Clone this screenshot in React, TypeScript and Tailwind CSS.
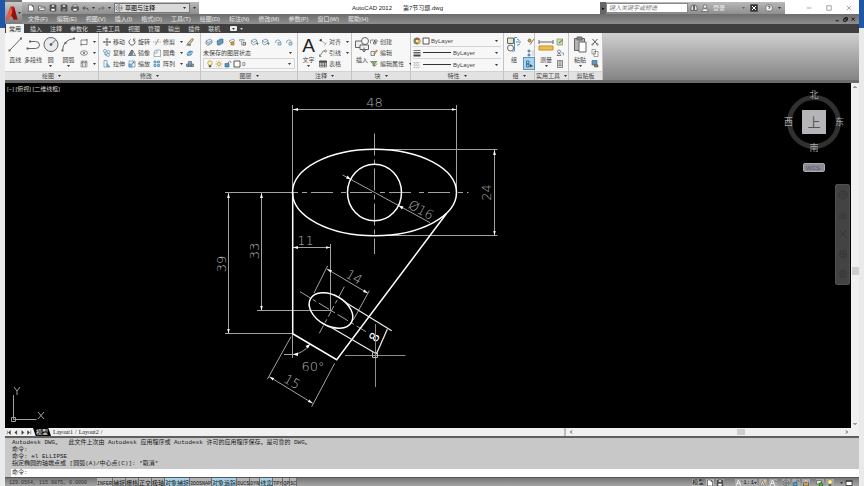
import type { ReactNode } from "react";

const MENUS = [
  "文件(F)", "编辑(E)", "视图(V)", "插入(I)", "格式(O)", "工具(T)",
  "绘图(D)", "标注(N)", "修改(M)", "参数(P)", "窗口(W)", "帮助(H)",
];

const TABS = ["插入", "注释", "参数化", "三维工具", "视图", "管理", "输出", "插件", "联机"];

const TOGGLES = [
  { label: "INFER" },
  { label: "捕捉", cjk: true },
  { label: "栅格", cjk: true },
  { label: "正交", cjk: true },
  { label: "极轴", cjk: true },
  { label: "对象捕捉", cjk: true, on: true },
  { label: "3DOSNAP" },
  { label: "对象追踪", cjk: true, on: true },
  { label: "DUCS" },
  { label: "DYN" },
  { label: "线宽", cjk: true, on: true },
  { label: "TPY" },
  { label: "QP" },
  { label: "SC" },
];

const HISTORY = [
  "Autodesk DWG。  此文件上次由 Autodesk 应用程序或 Autodesk 许可的应用程序保存。是可靠的 DWG。",
  "命令:",
  "命令: el ELLIPSE",
  "指定椭圆的轴端点或 [圆弧(A)/中心点(C)]: *取消*",
];

// 16x16 line glyphs used all over the ribbon
const GLYPHS: Record<string, ReactNode> = {
  new: <path d="M3 2h7l3 3v9H3zM10 2v3h3" fill="#fff" />,
  open: <path d="M1 13V4h5l1 2h6v2M1 13l3-5h11l-3 5z" fill="#eee" />,
  save: <><path d="M2 2h12v12H2z" fill="#555" /><path d="M5 2h6v4H5zM4 9h8v5H4z" fill="#fff" /></>,
  saveAs: <><path d="M2 2h12v12H2z" fill="#555" /><path d="M5 2h6v4H5z" fill="#fff" /><path d="M5 12h6" stroke="#fff" /></>,
  print: <><path d="M4 2h8v4H4zM4 10h8v4H4z" fill="#fff" /><path d="M1 6h14v6H1z" fill="#666" /><path d="M4 9h8v5H4z" fill="#fff" /></>,
  undo: <path d="M6 3L2 7l4 4M2 7h8q4 0 4 5" strokeWidth="2" />,
  redo: <path d="M10 3l4 4-4 4M14 7H6q-4 0-4 5" strokeWidth="2" />,
  gear: <><circle cx="8" cy="8" r="6" strokeDasharray="2 1.5" strokeWidth="2" /><circle cx="8" cy="8" r="2.5" /></>,
  rect: <><path d="M2 4h12v9H2z" /><path d="M1 12h3v3H1zM12 2h3v3h-3z" fill="#777" stroke="none" /></>,
  ellipse: <><ellipse cx="8" cy="8" rx="7" ry="4.5" /><path d="M7 7h2v2H7z" fill="#444" /></>,
  hatch: <path d="M2 2h12v12H2zM2 8l6-6M2 13L13 2M7 14l7-7M2 5h12M5 2v12M11 2v12" strokeWidth="0.8" />,
  move: <path d="M8 1v14M1 8h14M6 3l2-2 2 2M6 13l2 2 2-2M3 6L1 8l2 2M13 6l2 2-2 2" strokeWidth="1.6" />,
  rotate: <><path d="M5 3a6 6 0 1 0 6 0" strokeWidth="1.6" /><path d="M11 7V2h4" /></>,
  trim: <><path d="M0 8h6M10 8h6" stroke="#888" strokeDasharray="3 1" /><path d="M5 14L11 2" /></>,
  pencil: <><path d="M3 11L12 1l3 2-8 10z" fill="#e9c98a" /><path d="M1 14h9" strokeWidth="2" /></>,
  copy: <><circle cx="4" cy="4" r="3" stroke="#3c7fae" /><circle cx="11" cy="6" r="3" stroke="#3c7fae" /><circle cx="10" cy="12" r="3" stroke="#3c7fae" /><path d="M4 7v5h3" /></>,
  mirror: <><path d="M7 2v11H1z" fill="#5a93bb" /><path d="M9 2v11h6z" fill="#d5e6f2" /></>,
  fillet: <path d="M2 15V8q0-6 6-6h7v13zM2 8h6V2" stroke="#6b8699" />,
  explode: <><path d="M2 9l5-5 7 1-4 7-7 1z" fill="#5ca0cf" stroke="#2f6e9d" /><path d="M3 9l5 1 6-5" stroke="#fff" /></>,
  stretch: <><path d="M2 1h6v13H2z" stroke="#3c7fae" /><path d="M8 7l6 7H8z" fill="#8fbad7" stroke="#3c7fae" /></>,
  scale: <><path d="M2 2h12v12H2z" stroke="#3c7fae" /><path d="M2 8h6v6H2z" fill="#8fbad7" stroke="#3c7fae" /><path d="M8 8l4-4M9 4h3v3" /></>,
  array: <path d="M2 2h4v4H2zM9 2h4v4H9zM2 9h4v4H2zM9 9h4v4H9z" fill="#b9d6e8" stroke="#3c7fae" strokeWidth="1.4" />,
  offset: <><path d="M1 13V8h4V3h6v5h4v5z" fill="#78a9c9" stroke="#47545e" /><path d="M5 13v-3h6v3" /></>,
  layer: <><path d="M2 6l8-4 4 3-8 5z" fill="#dcecf6" stroke="#47738f" /><path d="M2 9l4 4 8-5M2 6v6l4 3 8-5V5" stroke="#47738f" /></>,
  layerBlue: <path d="M2 6l7-4h5v8l-7 4H3z" fill="#5d9cc6" stroke="#315e7d" />,
  layerSun: <><path d="M2 6l8-4 4 3-8 5z" stroke="#47738f" /><path d="M6 8h6v6H6z" fill="#d99b3b" stroke="#a36b1c" /></>,
  layerLock: <><path d="M1 3h9v3H1zM5 6v8h8V8" stroke="#6f8390" /><path d="M8 9h5v5H8z" fill="#ead9ad" /></>,
  layerGo: <><path d="M1 5l7-3 4 3-7 4zM1 5v6l4 3 7-4V5" stroke="#47738f" /><path d="M10 11h5M13 9v5" stroke="#2c6c2c" /></>,
  loop: <><path d="M3 10a5 5 0 1 1 10-2" stroke="#5b8fb1" strokeWidth="1.5" /><path d="M8 9h6v5H8z" fill="#cfe1ec" stroke="#52778f" /></>,
  bulb: <><circle cx="8" cy="6" r="4.5" fill="#fff2a6" stroke="#9c8631" /><path d="M6 11h4v3H6z" fill="#888" /></>,
  sun: <><circle cx="8" cy="8" r="3.5" fill="#ffe9a0" stroke="#a37f20" /><path d="M8 1v2M8 13v2M1 8h2M13 8h2M3 3l1 1M12 12l1 1M13 3l-1 1M4 12l-1 1" stroke="#a37f20" /></>,
  unlock: <><path d="M2 7h8v7H2z" fill="#4d97c8" stroke="#2b5f83" /><path d="M9 7V4q2-4 5 0v2" /></>,
  swatch: <path d="M2 2h12v12H2z" fill="#fff" stroke="#222" strokeWidth="1.5" />,
  align: <><path d="M2 4l12 8M5 1L1 6M15 9l-4 6" stroke="#7b8791" /><path d="M2 3h3v3H2z" fill="#444" /></>,
  leader: <><path d="M2 14L8 4h3" /><circle cx="13" cy="4" r="2" /><path d="M1 11v4h4" /></>,
  table: <><path d="M1 2h14v12H1zM1 8h14M1 11h14M6 5v9M11 5v9" /><path d="M1 2h14v3H1z" fill="#555" /></>,
  create: <><path d="M1 11V4h8v4" /><path d="M7 8h5v4H7z" fill="#dcdcdc" /><circle cx="12" cy="6" r="2.5" /></>,
  edit: <><path d="M2 5h7v8H2z" /><path d="M7 10l6-8 2 1-6 8z" fill="#deb25a" stroke="#8b6b2b" /></>,
  attr: <><path d="M1 3h13l-5 5v4H6V8z" fill="#89a878" stroke="#56704a" /><path d="M9 13l5-6" stroke="#b17e26" strokeWidth="2" /></>,
  wheel: <><circle cx="8" cy="8" r="6.5" fill="#62994e" stroke="#777" /><path d="M8 8L2 5q6-7 12 0z" fill="#cf4b3c" stroke="none" /><path d="M8 8l6-3q3 6-4 9z" fill="#e8b53c" stroke="none" /><circle cx="8" cy="8" r="2.5" fill="#eee" stroke="none" /></>,
  weights: <><path d="M1 3h14" strokeWidth="1.5" /><path d="M1 7.5h14" strokeWidth="2.5" /><path d="M1 13h14" strokeWidth="4" /></>,
  types: <path d="M1 3h14M1 8h14M1 13h14M4 3v10M9 3v10" stroke="#999" strokeDasharray="3 1.5" />,
  groupEdit: <><circle cx="5" cy="5" r="3" fill="#c3a13b" /><path d="M6 13L14 2" stroke="#a36b1c" strokeWidth="2" /></>,
  groupList: <><path d="M2 2h4v4H2zM2 10h4v4H2z" fill="#7fa9c5" stroke="#47738f" /><path d="M9 4h5M9 8h5M9 12h5" stroke="#aaa" /></>,
  groupSel: <><path d="M3 2h5v5H3zM3 9h5v5H3z" stroke="#1f557b" strokeWidth="1.5" /><path d="M10 9v5l5-2z" fill="#1f557b" /></>,
  quick: <><path d="M2 2h11v12H2z" fill="#cbd9a8" stroke="#77875a" /><path d="M6 10l8-7" stroke="#4a7a2d" strokeWidth="2" /></>,
  point: <><circle cx="6" cy="5" r="3" /><path d="M2 13l4-5 4 5z" /><path d="M10 8h5v5" stroke="#47738f" /></>,
  calc: <><path d="M3 1h10v14H3z" fill="#ddd" /><path d="M5 4h6M5 8h6M5 11h6" /></>,
  cut: <><path d="M3 2l9 10M13 2L4 12" strokeWidth="1.8" /><circle cx="3" cy="13" r="1.5" /><circle cx="13" cy="13" r="1.5" /></>,
  dup: <path d="M2 1h7v9H2zM6 5h8v10H6z" fill="#fff" stroke="#666" />,
  brush: <><path d="M2 1h10v9H2z" fill="#5f97bd" stroke="#315e7d" /><path d="M7 10h7v4H7z" fill="#c98f39" /></>,
  find: <path d="M2 13V7l3-5h2v11zM9 13V2h2l3 5v6zM7 7h2" fill="#e4e4e4" stroke="#333" />,
  user: <><circle cx="8" cy="5" r="3.5" fill="#eee" /><path d="M1 15q1-6 7-6t7 6z" fill="#eee" /></>,
  exchange: <><path d="M1 1h14v14H1z" fill="#333" /><path d="M4 4l8 8M12 4l-8 8" stroke="#fff" strokeWidth="2" /></>,
  help: <><circle cx="8" cy="8" r="7" fill="#eee" stroke="#444" /><path d="M6 6q0-2 2-2t2 2-2 3v1M8 12v1" stroke="#222" strokeWidth="1.5" /></>,
  anno: <><path d="M7 2L2 14M7 2l5 12M4 9h6" stroke="#eee" strokeWidth="1.8" /><path d="M12 3l3 3" stroke="#222" /></>,
  annoSun: <><path d="M7 3L2 14h3l2-5 2 5h3z" fill="#fff" stroke="#666" /><circle cx="12" cy="4" r="2.5" fill="#eac84a" stroke="none" /></>,
  lock: <><path d="M3 7h10v7H3z" fill="#d5a24a" /><path d="M5 7V5q3-5 6 0v2" stroke="#eee" /></>,
  hw: <><path d="M1 3h10v7H1z" fill="#dde8d4" /><circle cx="10" cy="11" r="4" fill="#4da43d" stroke="#265f1e" /></>,
  clean: <path d="M2 3h12v10H2zM2 5h12" fill="#fff" stroke="#222" strokeWidth="1.5" />,
};

function Glyph({ name, className = "w-2 h-2" }: { name: string; className?: string }) {
  return (
    <svg className={`${className} shrink-0`} viewBox="0 0 16 16" fill="none" stroke="#444" strokeWidth="1.2" aria-hidden="true">
      {GLYPHS[name]}
    </svg>
  );
}

function Caret({ className = "text-[#333]" }: { className?: string }) {
  return (
    <svg className={`w-[3px] h-[2px] shrink-0 ${className}`} viewBox="0 0 6 4" fill="currentColor" aria-hidden="true">
      <path d="M0 0h6L3 4z" />
    </svg>
  );
}

function Panel({ title, caret = true, className, children }: { title: string; caret?: boolean; className: string; children: ReactNode }) {
  return (
    <section className={`flex flex-col shrink-0 border-r border-[#c4c4c4] bg-[#f7f7f7] ${className}`}>
      <div className="flex flex-1 items-stretch px-[2px] pt-[3px]">{children}</div>
      <h2 className="flex h-[9px] items-center justify-center gap-1 bg-[#e2e2e2] border-t border-[#d2d2d2]">
        {title}
        {caret && <Caret />}
      </h2>
    </section>
  );
}

function BigTool({ label, caret, className, children }: { label: string; caret?: boolean; className: string; children: ReactNode }) {
  return (
    <button className={`flex flex-col items-center ${className}`}>
      <svg className="w-4 h-[17px]" viewBox="0 0 32 34" fill="none" stroke="#666" strokeWidth="2" aria-hidden="true">
        {children}
      </svg>
      <span className="mt-1 whitespace-nowrap">{label}</span>
      {caret && <span className="mt-[2px]"><Caret /></span>}
    </button>
  );
}

function Tool({ icon, label, caret }: { icon: string; label?: string; caret?: boolean }) {
  return (
    <button className="flex h-[11px] items-center gap-[2px] whitespace-nowrap" aria-label={label ?? icon}>
      <Glyph name={icon} />
      {label}
      {caret && <span className="pl-[3px]"><Caret /></span>}
    </button>
  );
}

function Combo({ label, value }: { label: string; value: string }) {
  return (
    <span className="flex flex-1 items-center min-w-0 pr-[3px]">
      <select aria-label={label} className="appearance-none flex-1 min-w-0 bg-transparent outline-none leading-[8px]">
        <option>{value}</option>
      </select>
      <Caret />
    </span>
  );
}

function TitleBar() {
  return (
    <div className="flex h-[14px] items-center justify-between pt-[2px] bg-white">
      <div className="flex h-full w-[177px] items-center gap-[3px] bg-gradient-to-b from-[#b9b9b9] to-[#8e8e8e] pl-[5px]">
        <div className="flex items-center gap-[3px]">
          {["new", "open", "save", "saveAs", "print"].map((n) => (
            <button key={n} aria-label={n}><Glyph name={n} /></button>
          ))}
          <button aria-label="undo"><Glyph name="undo" className="w-[7px] h-[7px]" /></button>
          <Caret />
          <button aria-label="redo"><Glyph name="redo" className="w-[7px] h-[7px] opacity-60" /></button>
          <Caret />
        </div>
        <div className="flex flex-1 h-[10px] items-center gap-[2px] bg-[#dadada] border border-[#777] text-black">
          <Glyph name="gear" />
          <Combo label="工作空间" value="草图与注释" />
        </div>
        <span className="pr-[3px]"><Caret /></span>
      </div>
      <h1 className="flex flex-1 justify-center gap-[11px] pr-1 text-[#222] whitespace-nowrap">
        <span>AutoCAD 2012</span>
        <span>第7节习题.dwg</span>
      </h1>
      <div className="flex h-full w-[185px] items-center bg-gradient-to-b from-[#b9b9b9] to-[#8e8e8e]">
        <span className="flex h-full w-[6px] items-center justify-center bg-[#666] text-[5px] text-black">▸</span>
        <input
          aria-label="搜索"
          placeholder="键入关键字或短语"
          className="h-[10px] w-[82px] bg-white px-[2px] italic border border-[#888] outline-none placeholder:text-[#777]"
        />
        <div className="flex flex-1 items-center gap-[3px] pl-[2px] pr-1">
          <button aria-label="查找"><Glyph name="find" /></button>
          <button className="flex items-center gap-1 text-[#eee]"><Glyph name="user" />登录</button>
          <span className="flex-1" />
          <Caret className="text-[#666]" />
          <button aria-label="Exchange" className="px-[2px]"><Glyph name="exchange" /></button>
          <button aria-label="帮助" className="px-[2px]"><Glyph name="help" /></button>
          <Caret />
        </div>
      </div>
      <div className="flex w-[74px] items-center justify-end gap-[14px] pr-[7px]">
        {["M1 4h6", "M1 1h6v6H1z", "M1 1l6 6M7 1L1 7"].map((d) => (
          <button key={d} aria-label="窗口">
            <svg className="w-[6px] h-[6px]" viewBox="0 0 8 8" fill="none" stroke="#888"><path d={d} /></svg>
          </button>
        ))}
      </div>
    </div>
  );
}

function Ribbon() {
  return (
    <div className="flex h-[50px] bg-gradient-to-b from-[#d0d0d0] to-[#848484] border-b-[3px] border-[#6c6c6c] text-[#444]">
      <Panel title="绘图" className="w-[94px]">
        <BigTool label="直线" className="w-[17px]">
          <path d="M5 29L28 5" />
          <path d="M3 27h4v4H3zM26 3h4v4h-4z" fill="#666" stroke="none" />
        </BigTool>
        <BigTool label="多段线" className="w-[20px]">
          <path d="M5 25h16q8 0 8-7t-8-7H10" />
          <path d="M3 23h4v4H3zM8 9h4v4H8z" fill="#666" stroke="none" />
        </BigTool>
        <BigTool label="圆" caret className="w-[17px]">
          <circle cx="16" cy="17" r="14" fill="#e8ebee" />
          <path d="M16 17l9-9" />
          <circle cx="16" cy="17" r="2" fill="#555" />
        </BigTool>
        <BigTool label="圆弧" caret className="w-[20px]">
          <path d="M5 29Q6 8 28 5" />
          <path d="M3 27h4v4H3zM26 3h4v4h-4zM9 12h4v4H9z" fill="#666" stroke="none" />
        </BigTool>
        <div className="flex flex-col pl-[2px]">
          <Tool icon="rect" caret />
          <Tool icon="ellipse" caret />
          <Tool icon="hatch" caret />
        </div>
      </Panel>

      <Panel title="修改" className="w-[102px]">
        <div className="flex flex-1 justify-between pl-[2px] pr-1">
          <div>
            <Tool icon="move" label="移动" />
            <Tool icon="copy" label="复制" />
            <Tool icon="stretch" label="拉伸" />
          </div>
          <div>
            <Tool icon="rotate" label="旋转" />
            <Tool icon="mirror" label="镜像" />
            <Tool icon="scale" label="缩放" />
          </div>
          <div>
            <Tool icon="trim" label="修剪" caret />
            <Tool icon="fillet" label="圆角" caret />
            <Tool icon="array" label="阵列" caret />
          </div>
          <div>
            <Tool icon="pencil" />
            <Tool icon="explode" />
            <Tool icon="offset" />
          </div>
        </div>
      </Panel>

      <Panel title="图层" className="w-[97px]">
        <div className="flex flex-1 flex-col">
          <div className="flex h-[11px] justify-between px-[2px]">
            {["layer", "layerBlue", "layerSun", "layerLock", "layerGo", "layerGo", "loop", "loop"].map((n, i) => (
              <Tool key={i} icon={n} />
            ))}
          </div>
          <div className="flex h-[11px] items-center">
            <Combo label="图层状态" value="未保存的图层状态" />
          </div>
          <div className="flex h-[11px] items-center gap-px pl-[2px] border border-[#d5d5d5]">
            <Glyph name="bulb" />
            <Glyph name="sun" />
            <Glyph name="unlock" />
            <Glyph name="swatch" />
            <Combo label="图层" value="0" />
          </div>
        </div>
      </Panel>

      <Panel title="注释" className="w-[54px]">
        <button className="flex w-[19px] flex-col items-center">
          <span className="text-[19px] leading-[19px] text-[#222]">A</span>
          <span className="mt-[2px]">文字</span>
          <span className="mt-[2px]"><Caret /></span>
        </button>
        <div className="pl-[2px]">
          <Tool icon="align" label="对齐" caret />
          <Tool icon="leader" label="引线" caret />
          <Tool icon="table" label="表格" />
        </div>
      </Panel>

      <Panel title="块" className="w-[59px]">
        <BigTool label="插入" className="w-[16px]">
          <path d="M3 10h15v13H3z" fill="#eee" />
          <circle cx="22" cy="10" r="7" fill="#f7f7f7" />
          <path d="M12 18h17v9H12zM20 23v8M16 27l4 5 4-5" fill="#f1f1f1" />
        </BigTool>
        <div>
          <Tool icon="create" label="创建" />
          <Tool icon="edit" label="编辑" />
          <Tool icon="attr" label="编辑属性" caret />
        </div>
      </Panel>

      <Panel title="特性" className="w-[93px]">
        <div className="flex flex-1 flex-col">
          <div className="flex h-[11px] items-center gap-px border-b border-[#d5d5d5]">
            <Glyph name="wheel" />
            <Glyph name="swatch" />
            <Combo label="颜色" value="ByLayer" />
          </div>
          <div className="flex h-[12px] items-center gap-[2px] border-b border-[#d5d5d5]">
            <Glyph name="weights" />
            <span className="w-7 border-t border-[#333]" />
            <Combo label="线宽" value="ByLayer" />
          </div>
          <div className="flex h-[11px] items-center gap-[2px]">
            <Glyph name="types" />
            <span className="w-7 border-t border-[#333]" />
            <Combo label="线型" value="ByLayer" />
          </div>
        </div>
      </Panel>

      <Panel title="组" className="w-[31px]">
        <BigTool label="组" className="w-[16px]">
          <path d="M3 4h12v11H3z" fill="#dfe8c9" />
          <circle cx="9" cy="24" r="6" />
          <path d="M17 3h5M17 3v27h-5M20 12h10M22 6l5 3M22 19l6-3" stroke="#4f92bb" />
        </BigTool>
        <div className="flex flex-col items-end pl-px">
          <Tool icon="groupEdit" />
          <Tool icon="groupList" />
          <div className="bg-[#a9d3ee] border border-[#5d97bd] px-px -my-px"><Tool icon="groupSel" /></div>
        </div>
      </Panel>

      <Panel title="实用工具" className="w-[34px]">
        <BigTool label="测量" caret className="w-[18px]">
          <path d="M2 12h28M2 8v8M30 8v8" />
          <path d="M2 20h28v8H2z" fill="#eec148" stroke="#c08f2e" />
        </BigTool>
        <div className="pl-px">
          <Tool icon="quick" />
          <Tool icon="point" />
          <Tool icon="calc" />
        </div>
      </Panel>

      <Panel title="剪贴板" caret={false} className="w-[34px]">
        <BigTool label="粘贴" caret className="w-[18px]">
          <path d="M5 5h20v24H5z" fill="#b3b3b3" />
          <path d="M10 2h10v6H10z" fill="#888" />
          <path d="M14 12h14v20H14z" fill="#fff" />
        </BigTool>
        <div className="pl-[2px]">
          <Tool icon="cut" />
          <Tool icon="dup" />
          <Tool icon="brush" />
        </div>
      </Panel>
    </div>
  );
}

const DIMS = [
  { x1: 293, y1: 109.5, x2: 456.5, y2: 109.5 },
  { x1: 494.5, y1: 150, x2: 494.5, y2: 235.5 },
  { x1: 228.5, y1: 193, x2: 228.5, y2: 333.5 },
  { x1: 261.5, y1: 193, x2: 261.5, y2: 310.5 },
  { x1: 293, y1: 247.5, x2: 330.5, y2: 247.5 },
  { x1: 327, y1: 269, x2: 368, y2: 293.3 },
  { x1: 269.3, y1: 376.7, x2: 312.7, y2: 403.3 },
];

const LABELS = [
  { text: "48", x: 374.5, y: 101.5, rot: 0 },
  { text: "24", x: 486, y: 192.5, rot: -90 },
  { text: "39", x: 221, y: 264, rot: -90 },
  { text: "33", x: 253.5, y: 251, rot: -90 },
  { text: "11", x: 305.5, y: 240, rot: 0 },
  { text: "14", x: 354.3, y: 276.5, rot: 30 },
  { text: "15", x: 292.3, y: 381.3, rot: 30 },
  { text: "Ø16", x: 421.3, y: 209.5, rot: 29 },
  { text: "60°", x: 313, y: 366, rot: 0 },
];

function Drawing() {
  return (
    <svg className="block w-full h-full" viewBox="5 83 846 345" preserveAspectRatio="xMinYMin meet" fill="none">
      <defs>
        <marker id="arrow" viewBox="0 0 6 4" refX="6" refY="2" markerWidth="5" markerHeight="4" markerUnits="userSpaceOnUse" orient="auto-start-reverse">
          <path d="M0 0.3L6 2 0 3.7z" fill="#fff" />
        </marker>
      </defs>

      {/* extension lines */}
      <g stroke="#a2a2a2" strokeWidth="1">
        <path d="M292.5 105V192M456.5 105V192M374 149.5H497.5M374 235.5H497.5" />
        <path d="M225 192.5H298M225 333.5H292M257 310.5H331M330.5 244V311" />
        <path d="M327.7 265.7L314 293M369.3 290.7L353.3 320" />
        <path d="M291 336.7L267.3 379.3M334.7 363.3L311.7 406.7M292.5 333V358" />
        <path d="M284 354.5H293Q303 353.5 310 344.5" />
        <path d="M342.7 175L430 222.7" />
        {DIMS.map((d, i) => (
          <line key={i} {...d} markerStart="url(#arrow)" markerEnd="url(#arrow)" />
        ))}
      </g>
      <g fill="#fff">
        <path d="M351 179.5l-5-1 1.5-3zM398.5 205.5l5 1-1.5 3zM310 344l-4.5 2 2.5 2.5zM293 354.5l5-2v3.5z" />
      </g>

      {/* centre lines */}
      <g stroke="#a2a2a2" strokeWidth="1">
        <path d="M298 192.5H468.5" strokeDasharray="0 4 5 4 22 4" />
        <path d="M374.5 133.5V254" strokeDasharray="22 4 5 4" />
        <path d="M300 291.7L366 331.7M344.3 286.7L319.3 333.3" strokeDasharray="12 3 4 3" />
      </g>

      {/* part outline */}
      <g stroke="#fff" strokeWidth="1.5">
        <ellipse cx="374.5" cy="192.5" rx="82" ry="43.2" />
        <ellipse cx="374.5" cy="192.5" rx="27" ry="28.3" />
        <path d="M292.7 192.5V333.7L336.7 359.7L446.7 213.3" />
        <ellipse cx="331" cy="310.5" rx="23.6" ry="15.3" transform="rotate(30 331 310.5)" />
      </g>

      {/* selected dimension */}
      <g stroke="#e8e8e8" strokeWidth="1.3">
        <path d="M343.3 301L391.7 330.7M330 326.7L376.7 354M387.3 329.3L376.7 353.3" />
      </g>

      <g fill="#b4b4b4" className="font-['DejaVu_Sans',sans-serif] font-extralight text-[13px]" textAnchor="middle">
        {LABELS.map((l) => (
          <text key={l.text} x={l.x} y={l.y + 5} transform={`rotate(${l.rot} ${l.x} ${l.y})`}>{l.text}</text>
        ))}
        <text x="374" y="342" transform="rotate(-60 374 337)" fill="#fff" className="font-normal">8</text>
      </g>

      {/* crosshair */}
      <g stroke="#8c8c8c" strokeWidth="1">
        <path d="M345 355.5H405.5M375.5 324V387" />
        <path d="M372.5 352.5h5v5h-5z" stroke="#bbb" />
      </g>

      {/* UCS */}
      <g stroke="#a0a0a0" strokeWidth="1">
        <path d="M13.5 395V419.5H36.5M11.5 417.5h4v4h-4z" />
        <path d="M14 387l3 4 3-4M17 391v4M38 412l6 7M44 412l-6 7" />
      </g>
    </svg>
  );
}

function ViewCube() {
  return (
    <div className="absolute top-2 right-[7px] flex flex-col items-center text-[9px] text-[#a5a5a5]">
      <div className="flex h-[62px] w-[60px] flex-col items-center justify-between">
        <span className="relative z-10">北</span>
        <div className="-my-4 flex h-[54px] w-[54px] items-center justify-center rounded-full border-[5px] border-[#303030]">
          <span className="relative z-10">西</span>
          <button className="mx-[9px] h-6 w-6 shrink-0 bg-[#b5b5b9] text-[13px] text-[#555]">上</button>
          <span className="relative z-10">东</span>
        </div>
        <span className="relative z-10">南</span>
      </div>
      <button className="mt-[10px] h-[9px] w-[22px] rounded-[2px] bg-[#8c8c98] border border-[#aaa] pl-[2px] text-left text-[6px] text-[#55555f]">WCS</button>
    </div>
  );
}

function NavBar() {
  return (
    <div className="absolute top-[101px] right-px flex h-[101px] w-[15px] flex-col items-center justify-around rounded-[2px] bg-[#434343] border border-[#505050]">
      {["M5 1a4 4 0 1 0 .1 0M5 3a2 2 0 1 0 .1 0", "M2 9V4M4 9V2M6 9V2M8 9V4", "M1 1l8 8M9 1L1 9", "M5 1v8M1 5h8M2 2h6v6H2z", "M2 2h6v6H2zM4 4h2v2H4z"].map((d) => (
        <button key={d} aria-label="导航">
          <svg className="w-[10px] h-[10px]" viewBox="0 0 10 10" fill="none" stroke="#363636"><path d={d} /></svg>
        </button>
      ))}
    </div>
  );
}

function StatusBar() {
  return (
    <footer className="flex h-[9px] items-start justify-between overflow-hidden bg-gradient-to-b from-[#777] to-[#a5a5a5] border-t border-[#555] font-['Liberation_Mono','Noto_Sans_CJK_SC',monospace] text-[#111]">
      <div className="flex">
        <span className="w-[92px] pl-1 pt-[3px] text-[5px] text-[#333] whitespace-nowrap">129.0564, 115.9875, 0.0000</span>
        {TOGGLES.map((t) => (
          <button
            key={t.label}
            aria-pressed={!!t.on}
            className={`h-[9px] pt-[2px] leading-[6px] border-r border-[#6b6b6b] whitespace-nowrap ${t.cjk ? "text-[6px]" : "text-[5px]"} ${t.on ? "bg-[#a8d4ea]" : "bg-[#b4b4b4]"}`}
          >
            {t.label}
          </button>
        ))}
      </div>
      <div className="flex items-center gap-[2px] pt-px pr-[2px] text-[6px] leading-[8px]">
        <button className="bg-[#b4b4b4]">模型</button>
        <button aria-label="布局" className="bg-[#b4b4b4]"><Glyph name="new" /></button>
        <button aria-label="快速查看" className="bg-[#b4b4b4] mr-[9px]"><Glyph name="save" /></button>
        <button aria-label="注释比例" className="flex items-center bg-[#a8a8a8]"><Glyph name="anno" />1:1<Caret /></button>
        <button aria-label="注释可见性" className="bg-[#a8a8a8]"><Glyph name="annoSun" /></button>
        <button aria-label="自动比例" className="bg-[#a8a8a8] mr-[3px]"><Glyph name="anno" /></button>
        <button aria-label="切换工作空间" className="bg-[#a8a8a8]"><Glyph name="gear" /></button>
        <button aria-label="锁定" className="bg-[#a8a8a8]"><Glyph name="unlock" /></button>
        <button aria-label="锁定窗口" className="bg-[#a8a8a8] mr-1"><Glyph name="lock" /></button>
        <button aria-label="硬件加速" className="bg-[#a8a8a8]"><Glyph name="hw" /></button>
        <button aria-label="隔离对象" className="bg-[#a8a8a8] mr-1"><Glyph name="bulb" /></button>
        <Caret />
        <button aria-label="全屏显示" className="mr-1"><Glyph name="clean" /></button>
      </div>
    </footer>
  );
}

export default function App() {
  return (
    <div className="flex h-screen overflow-hidden bg-[#e9eaec] font-['Liberation_Sans','Noto_Sans_CJK_SC',sans-serif] text-[6px] leading-none">
      <div className="w-[5px] shrink-0"><div className="h-7 bg-[#1f56a8]" /></div>

      <div className="flex min-w-0 flex-1 flex-col">
        {/* Title and menu bar share the application button */}
        <header className="flex bg-[#6f6f6f]">
          <button aria-label="AutoCAD" className="mt-[2px] flex w-[17px] shrink-0 items-center bg-gradient-to-b from-[#c9c9c9] to-[#7c7c7c]">
            <svg className="w-[13px] h-[18px]" viewBox="0 0 26 36">
              <path d="M2 31L11 5h7l7 26h-8l-2-6H9l-2 6z" fill="#c3281f" />
              <path d="M11 5l4 13-8 13H2z" fill="#e8594b" />
              <path d="M18 5l7 26h-8l-4-9z" fill="#8f120e" />
            </svg>
            <Caret />
          </button>
          <div className="min-w-0 flex-1">
            <TitleBar />
            <div className="flex h-[10px] items-center justify-between bg-gradient-to-b from-[#6d6d6d] to-[#8f8f8f] pl-[6px] pr-[3px] text-[#e8e8e8]">
              <nav className="flex gap-[9px]">
                {MENUS.map((m) => <button key={m} className="whitespace-nowrap">{m}</button>)}
              </nav>
              <div className="flex gap-[3px]">
                {["M1 6h5", "M1 3h4v4H1zM3 3V1h4v4H5", "M1 1l5 5M6 1L1 6"].map((d) => (
                  <button key={d} aria-label="文档窗口">
                    <svg className="w-[5px] h-[5px]" viewBox="0 0 8 8" fill="none" stroke="#111" strokeWidth="1.5"><path d={d} /></svg>
                  </button>
                ))}
              </div>
            </div>
          </div>
        </header>

        <nav className="flex h-[9px] items-center bg-[#3f3f3f] text-[#dcdcdc]">
          <button className="ml-px mr-[2px] h-full bg-[#f2f2f2] px-[3px] text-[#222]">常用</button>
          {TABS.map((t) => <button key={t} className="px-1 whitespace-nowrap">{t}</button>)}
          <button aria-label="最小化功能区" className="ml-[6px] flex items-center gap-[3px]">
            <span className="flex h-[5px] w-[7px] items-center justify-center rounded-[1px] bg-[#eee]"><Caret /></span>
            <Caret className="text-[#ccc]" />
          </button>
        </nav>

        <Ribbon />

        {/* Model space */}
        <main className="flex min-h-0 flex-1">
          <div className="relative min-w-0 flex-1 bg-black">
            <Drawing />
            <p className="absolute top-[3px] left-[2px] text-[#d0d0d0]">[−] [俯视] [二维线框]</p>
            <ViewCube />
            <NavBar />
          </div>
          <div className="flex w-2 flex-col items-center justify-between bg-[#f0f0f0] py-[2px] text-[#444]">
            <svg className="w-1 h-1" viewBox="0 0 8 8" fill="none" stroke="currentColor" strokeWidth="2"><path d="M1 6l3-3 3 3" /></svg>
            <span className="h-2 w-[7px] mt-[178px] mb-auto bg-[#cdcdcd]" />
            <svg className="w-1 h-1" viewBox="0 0 8 8" fill="none" stroke="currentColor" strokeWidth="2"><path d="M1 2l3 3 3-3" /></svg>
          </div>
        </main>

        <div className="flex h-2 shrink-0 items-stretch bg-[#f0f0f0] font-['Liberation_Serif','Noto_Sans_CJK_SC',serif] text-[#222]">
          <div className="flex w-[559px] items-center">
            {["M2 1v6M7 1L4 4l3 3z", "M6 1L3 4l3 3z", "M3 1l3 3-3 3z", "M6 1v6M1 1l3 3-3 3z"].map((d) => (
              <button key={d} aria-label="布局导航" className="px-px">
                <svg className="w-[5px] h-[5px]" viewBox="0 0 8 8" fill="#333" stroke="#333" strokeWidth="0.8"><path d={d} /></svg>
              </button>
            ))}
            <button className="h-full bg-black px-[3px] text-white [clip-path:polygon(0_0,85%_0,100%_100%,15%_100%)]">模型</button>
            <button className="px-[2px]">Layout1</button>/
            <button className="px-[2px]">Layout2</button>/
          </div>
          <div className="flex flex-1 items-center justify-between border-l-2 border-[#bbb] pl-[3px] pr-[10px] text-[#444]">
            <svg className="w-1 h-1" viewBox="0 0 8 8" fill="none" stroke="currentColor" strokeWidth="2"><path d="M6 1L3 4l3 3" /></svg>
            <span className="ml-auto mr-[100px] h-[6px] w-2 bg-[#cdcdcd]" />
            <svg className="w-1 h-1" viewBox="0 0 8 8" fill="none" stroke="currentColor" strokeWidth="2"><path d="M2 1l3 3-3 3" /></svg>
          </div>
        </div>

        {/* Command window */}
        <section className="shrink-0 border-t-2 border-[#5f5f5f] bg-[#c8c8c8] font-['Liberation_Mono','Noto_Sans_CJK_SC',monospace] text-[#1c1c1c]">
          <div className="h-[31px] pl-[7px] pt-px leading-[7px]">
            {HISTORY.map((line) => <p key={line} className="h-[7px] whitespace-pre">{line}</p>)}
          </div>
          <label className="flex h-2 items-center bg-white ml-[6px] pl-px">
            命令:
            <input className="ml-1 flex-1 outline-none" />
          </label>
        </section>

        <StatusBar />
      </div>

      <div className="w-[5px] shrink-0"><div className="h-7 bg-[#1f56a8]" /></div>
    </div>
  );
}
